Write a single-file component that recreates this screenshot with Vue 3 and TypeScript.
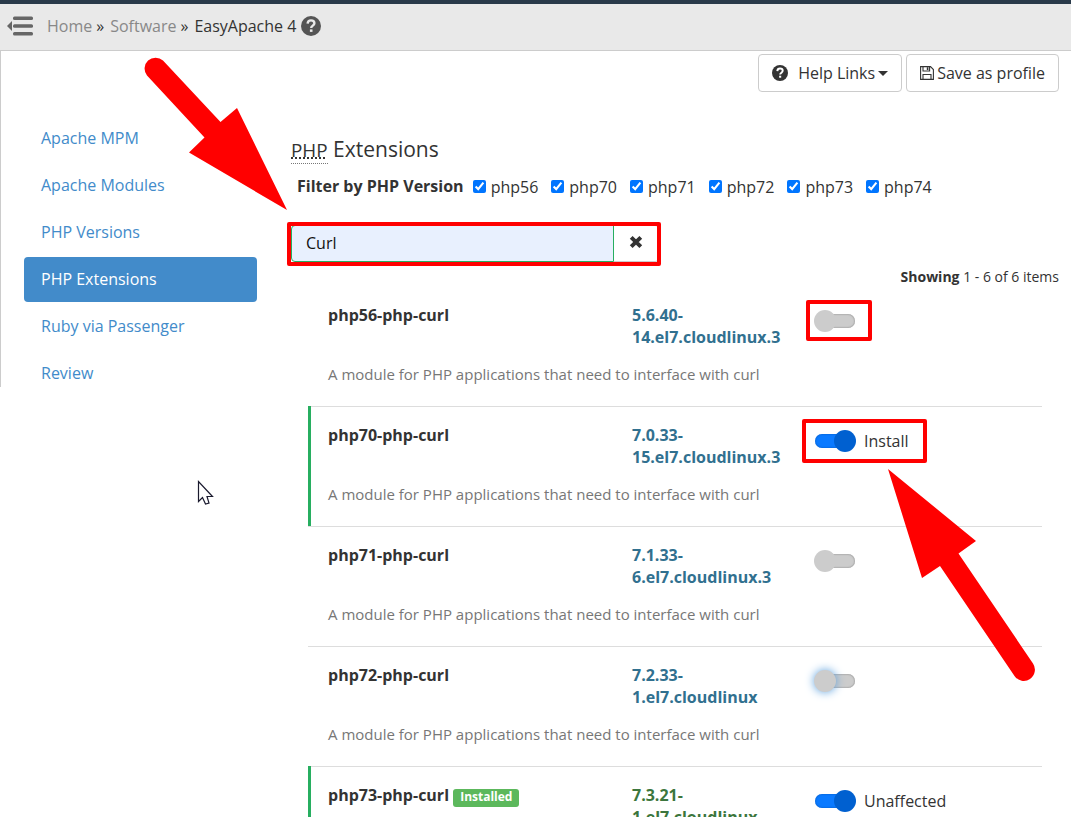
<script setup lang="ts">
import { ref } from 'vue'

interface PhpVersion {
  name: string
  checked: boolean
}

interface Extension {
  name: string
  version: string
  selected: boolean
  status: string
  installed?: boolean
  focused?: boolean
}

const steps: string[] = [
  'Apache MPM',
  'Apache Modules',
  'PHP Versions',
  'PHP Extensions',
  'Ruby via Passenger',
  'Review',
]
const currentStep = ref('PHP Extensions')

const phpVersions = ref<PhpVersion[]>(
  ['php56', 'php70', 'php71', 'php72', 'php73', 'php74'].map((name) => ({ name, checked: true })),
)

const search = ref('Curl')
const summary = 'A module for PHP applications that need to interface with curl'

const extensions = ref<Extension[]>([
  { name: 'php56-php-curl', version: '5.6.40-14.el7.cloudlinux.3', selected: false, status: '' },
  { name: 'php70-php-curl', version: '7.0.33-15.el7.cloudlinux.3', selected: true, status: 'Install' },
  { name: 'php71-php-curl', version: '7.1.33-6.el7.cloudlinux.3', selected: false, status: '' },
  { name: 'php72-php-curl', version: '7.2.33-1.el7.cloudlinux', selected: false, status: '', focused: true },
  { name: 'php73-php-curl', version: '7.3.21-1.el7.cloudlinux', selected: true, status: 'Unaffected', installed: true },
])
</script>

<template>
  <div class="page">
    <header class="topbar">
      <button class="icon-button" type="button" aria-label="Toggle menu">
        <svg class="menu-icon" viewBox="0 0 26 20" aria-hidden="true">
          <path d="M0 10 L5 5 V15 Z" />
          <rect x="6" y="0.5" width="20" height="3.4" rx="1.5" />
          <rect x="6" y="8.3" width="20" height="3.4" rx="1.5" />
          <rect x="6" y="16.1" width="20" height="3.4" rx="1.5" />
        </svg>
      </button>
      <nav class="breadcrumb" aria-label="Breadcrumb">
        <a href="#home">Home</a>
        <span class="separator">»</span>
        <a href="#software">Software</a>
        <span class="separator">»</span>
        <span class="current">EasyApache 4</span>
      </nav>
      <button class="icon-button" type="button" aria-label="Help">
        <svg class="help-icon" viewBox="0 0 20 20" aria-hidden="true">
          <circle cx="10" cy="10" r="10" fill="#555" />
          <path d="M6.6 7.6 C6.8 5.2 8.3 4.4 10 4.4 C12 4.4 13.4 5.6 13.4 7.3 C13.4 9.6 10.2 9.6 10.2 12" fill="none" stroke="#e9e9e9" stroke-width="2.4" />
          <rect x="8.9" y="13.4" width="2.6" height="2.5" fill="#e9e9e9" />
        </svg>
      </button>
    </header>

    <div class="body">
      <div class="toolbar">
        <button class="button" type="button">
          <svg class="button-help" viewBox="0 0 20 20" aria-hidden="true">
            <circle cx="10" cy="10" r="10" fill="#333" />
            <path d="M6.6 7.6 C6.8 5.2 8.3 4.4 10 4.4 C12 4.4 13.4 5.6 13.4 7.3 C13.4 9.6 10.2 9.6 10.2 12" fill="none" stroke="#fff" stroke-width="2.4" />
            <rect x="8.9" y="13.4" width="2.6" height="2.5" fill="#fff" />
          </svg>
          Help Links
          <span class="caret"></span>
        </button>
        <button class="button" type="button">
          <svg class="button-save" viewBox="0 0 14 14" aria-hidden="true">
            <path d="M0.6 0.6 H10.5 L13.4 3.5 V13.4 H0.6 Z M3 0.6 V5 H9.6 V0.6 M3 13.4 V8.5 H11 V13.4" fill="none" stroke="#333" stroke-width="1.1" />
            <rect x="6.8" y="1.2" width="1.6" height="2.8" fill="#333" />
          </svg>
          Save as profile
        </button>
      </div>

      <div class="columns">
        <nav class="steps" aria-label="Steps">
          <a
            v-for="step in steps"
            :key="step"
            href="#"
            class="step"
            :class="{ active: step === currentStep }"
            @click.prevent="currentStep = step"
          >{{ step }}</a>
        </nav>

        <main class="main">
          <h2 class="title"><abbr title="PHP">PHP</abbr> Extensions</h2>

          <div class="filters">
            <span class="filters-label">Filter by PHP Version</span>
            <label v-for="item in phpVersions" :key="item.name" class="filter">
              <input v-model="item.checked" type="checkbox" />
              <span>{{ item.name }}</span>
            </label>
          </div>

          <div class="search">
            <input v-model="search" type="text" class="search-input" aria-label="Search" />
            <button class="search-clear" type="button" aria-label="Clear" @click="search = ''">
              <svg viewBox="0 0 14 14" aria-hidden="true">
                <path d="M2.2 2.4 L11.8 11.6 M11.8 2.4 L2.2 11.6" stroke="#333" stroke-width="4" />
              </svg>
            </button>
          </div>

          <p class="count"><strong>Showing</strong> 1 - 6 of 6 items</p>

          <ul class="list">
            <li v-for="ext in extensions" :key="ext.name" class="row" :class="{ selected: ext.selected }">
              <div class="name">
                {{ ext.name }}
                <span v-if="ext.installed" class="badge">Installed</span>
              </div>
              <div class="version" :class="{ current: ext.installed }">{{ ext.version }}</div>
              <label class="toggle">
                <input
                  v-model="ext.selected"
                  type="checkbox"
                  role="switch"
                  class="switch"
                  :class="{ glow: ext.focused }"
                  :aria-label="ext.name"
                />
                <span>{{ ext.status }}</span>
              </label>
              <p class="summary">{{ summary }}</p>
            </li>
          </ul>
        </main>
      </div>
    </div>

    <svg class="marks" width="1071" height="817" aria-hidden="true">
      <g fill="none" stroke="#f00" stroke-width="4" stroke-linejoin="round">
        <rect x="289" y="224" width="370" height="40" />
        <rect x="808" y="302" width="62" height="37" />
        <rect x="804" y="421" width="121" height="40" />
      </g>
      <g fill="#f00">
        <path d="M287 210 L237 108 L220.5 122 L163 60.5 A11 11 0 0 0 147 75.5 L204.5 137.5 L189 152.5 Z" />
        <path d="M888 469 L976 541 L958.5 553.5 L1033 663.5 A11 11 0 0 1 1014.5 676 L940 566 L922 578 Z" />
      </g>
      <path
        d="M198.5 481.5 V501.5 L202.5 497.5 L205.5 504 L209 503 L207 496.5 H212.5 Z"
        fill="#fff"
        stroke="#1a1a2e"
        stroke-width="1.2"
      />
    </svg>
  </div>
</template>

<style>
body {
  margin: 0;
  background: #fff;
}
</style>

<style scoped>
.page {
  position: relative;
  box-sizing: border-box;
  height: 100vh;
  overflow: hidden;
  border-top: 4px solid #293a4a;
  font-family: 'Open Sans', 'Noto Sans', sans-serif;
  font-size: 16px;
  line-height: 22px;
  color: #333;
}

.topbar {
  display: flex;
  align-items: center;
  box-sizing: border-box;
  height: 47px;
  padding: 0 7px 2px;
  background: #e9e9e9;
  border-bottom: 1px solid #ccc;
}

.icon-button {
  display: flex;
  padding: 0;
  border: 0;
  background: none;
}

.menu-icon {
  width: 26px;
  height: 20px;
  fill: #666;
}

.help-icon {
  width: 20px;
  height: 20px;
}

.breadcrumb {
  display: flex;
  gap: 4px;
  margin: 0 5px 0 14px;
}

.breadcrumb a {
  color: #888;
  text-decoration: none;
}

.separator {
  margin-right: 2px;
}

.body {
  padding: 3px 12px 0 24px;
  background: linear-gradient(#ccc, #ccc) 0 0 / 1px 336px no-repeat;
}

.toolbar {
  display: flex;
  justify-content: flex-end;
  gap: 4px;
}

.button {
  display: flex;
  align-items: center;
  gap: 3px;
  height: 38px;
  padding: 0 13px;
  border: 1px solid #ccc;
  border-radius: 4px;
  background: #fff;
  color: #333;
  font: inherit;
}

.button-help {
  width: 16px;
  height: 16px;
  margin-right: 7px;
}

.button-save {
  width: 14px;
  height: 14px;
}

.caret {
  border: 5px solid transparent;
  border-top: 5px solid #333;
  border-bottom: 0;
}

.columns {
  display: grid;
  grid-template-columns: 233px 1fr;
  gap: 34px;
}

.steps {
  display: flex;
  flex-direction: column;
  gap: 2px;
  padding-top: 24px;
}

.step {
  padding: 11px 17px 12px;
  border-radius: 4px;
  color: #428bca;
  text-decoration: none;
}

.step.active {
  background: #428bca;
  color: #fff;
}

.title {
  margin: 43px 0 0;
  font-size: 21px;
  font-weight: 400;
  line-height: 28px;
}

.title abbr {
  font-size: 90%;
  border-bottom: 1px dotted #777;
  text-decoration: underline dotted;
}

.filters {
  display: flex;
  align-items: center;
  flex-wrap: wrap;
  padding: 11px 0 0 6px;
}

.filters-label {
  margin-right: 9px;
  padding-bottom: 2px;
  font-weight: 700;
}

.filter {
  display: flex;
  align-items: center;
  gap: 5px;
  margin-right: 13px;
}

.filter input {
  width: 13px;
  height: 13px;
  margin: 0 0 2px;
  accent-color: #0075ff;
}

.search {
  display: flex;
  width: 368px;
  height: 37px;
  margin-top: 26px;
}

.search-input {
  box-sizing: border-box;
  flex: 1;
  min-width: 0;
  padding: 0 14px 2px;
  border: 1px solid #27ae60;
  border-radius: 4px 0 0 4px;
  background: #e8f0fe;
  color: #111;
  font: inherit;
}

.search-clear {
  display: flex;
  align-items: center;
  justify-content: center;
  width: 45px;
  padding: 0 0 4px;
  border: 1px solid #ccc;
  border-left: 0;
  border-radius: 0 4px 4px 0;
  background: #fff;
}

.search-clear svg {
  width: 14px;
  height: 14px;
}

.count {
  margin: 6px 0 0;
  font-size: 14px;
  line-height: 18px;
  text-align: right;
}

.list {
  margin: 0 17px;
  padding: 0;
  list-style: none;
}

.row {
  display: grid;
  grid-template-columns: 152fr 91fr 114fr;
  padding: 18px 0 21px 17px;
  border-left: 3px solid transparent;
}

.row + .row {
  background: linear-gradient(#ddd, #ddd) 0 0 / 100% 1px no-repeat border-box;
}

.row.selected {
  border-left-color: #27ae60;
}

.name,
.version {
  font-weight: 700;
}

.version {
  padding-right: 30px;
  color: #31708f;
}

.version.current {
  color: #3c763d;
}

.badge {
  display: inline-block;
  padding: 0 7px 2px;
  border-radius: 3px;
  background: #5cb85c;
  color: #fff;
  font-size: 12px;
  line-height: 16px;
}

.toggle {
  display: flex;
  align-items: center;
  gap: 9px;
  height: 34px;
}

.switch {
  position: relative;
  appearance: none;
  width: 40px;
  height: 14px;
  margin: 0 0 0 1px;
  border-radius: 7px;
  background: #ccc;
  box-shadow: inset 0 0 2px #777;
}

.switch::before {
  content: '';
  position: absolute;
  top: -4px;
  left: -1px;
  width: 22px;
  height: 22px;
  border-radius: 50%;
  background: #ccc;
}

.switch:checked {
  background: #0a7aff;
  box-shadow: inset 0 0 2px #0050b0;
}

.switch:checked::before {
  left: 19px;
  background: #0060d0;
}

.switch.glow::before {
  box-shadow: 0 0 10px #5b9fdd;
}

.summary {
  grid-column: 1 / -1;
  margin: 15px 0 0;
  color: #777;
  font-size: 15px;
}

.marks {
  position: absolute;
  top: -4px;
  left: 0;
  pointer-events: none;
}
</style>
